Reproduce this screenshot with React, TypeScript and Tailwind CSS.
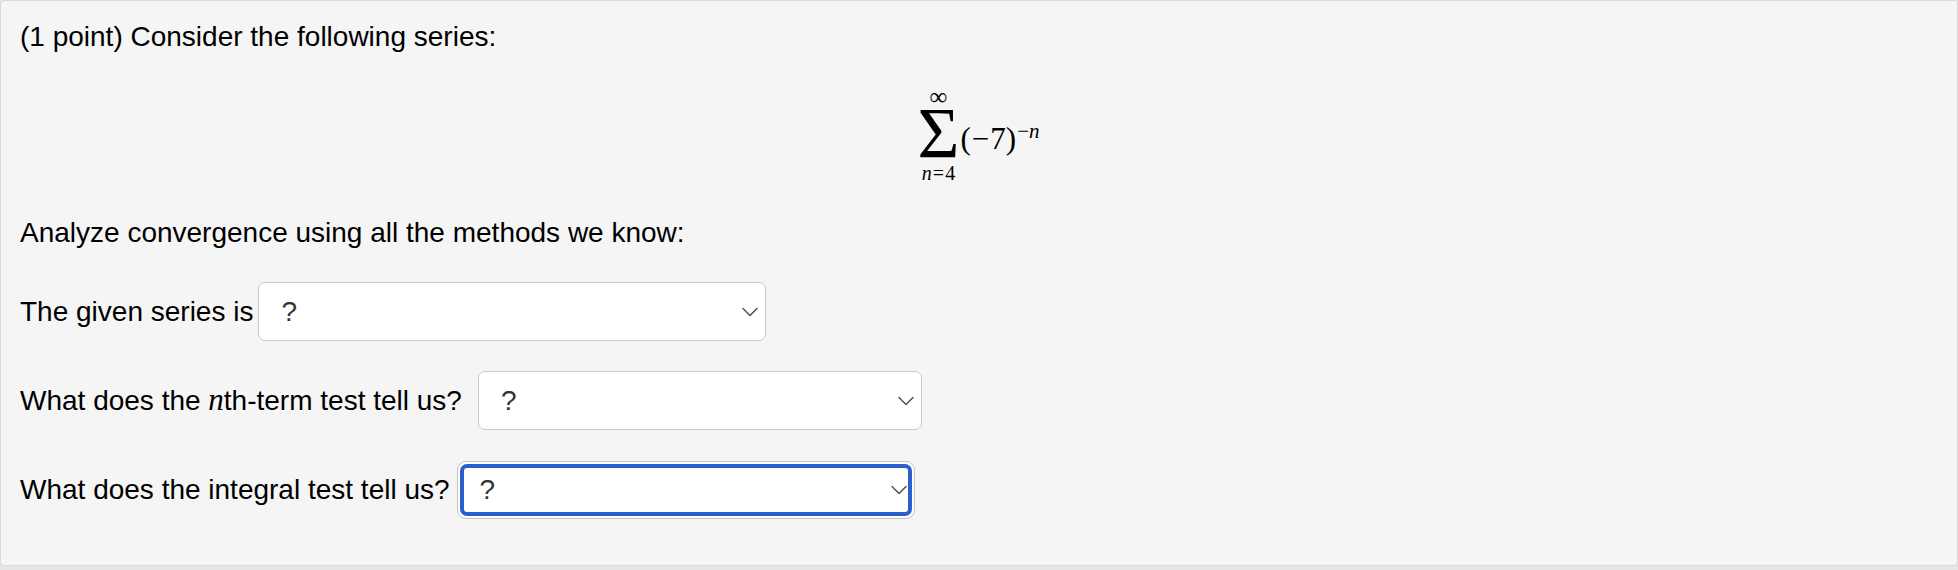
import React from 'react'

// ─── Small pieces ─────────────────────────────────────────────────────────────

function Chevron({ className }: { className: string }) {
  return (
    <svg
      viewBox="0 0 16 9"
      className={`pointer-events-none absolute top-1/2 h-[9px] w-[16px] -translate-y-1/2 ${className}`}
      fill="none"
      stroke="#555555"
      strokeWidth="1.6"
      strokeLinecap="round"
      strokeLinejoin="round"
    >
      <path d="M1 1l7 7 7-7" />
    </svg>
  )
}

function AnswerSelect({ width }: { width: string }) {
  return (
    <span className={`relative inline-block ${width}`}>
      <select
        defaultValue="?"
        className="h-[59px] w-full appearance-none rounded-[7px] border border-[#c9c9c9] bg-white pl-[22px] text-[28px] text-[#333333] outline-none [font-family:'Liberation_Sans',Arial,sans-serif]"
      >
        <option value="?">?</option>
        <option>convergent</option>
        <option>divergent</option>
      </select>
      <Chevron className="right-[8px]" />
    </span>
  )
}

function FocusedSelect() {
  return (
    <span className="relative inline-block w-[458px] rounded-[9px] border border-[#c4c4c4] bg-white p-[2px]">
      <select
        defaultValue="?"
        className="h-[52px] w-full appearance-none rounded-[7px] border-[4px] border-[#2b5fce] bg-white pl-[16px] text-[28px] text-[#333333] outline-none [font-family:'Liberation_Sans',Arial,sans-serif]"
      >
        <option value="?">?</option>
        <option>The integral test can be applied and the series converges</option>
        <option>The integral test cannot be applied</option>
      </select>
      <Chevron className="right-[7px]" />
    </span>
  )
}

// ─── Math display ─────────────────────────────────────────────────────────────

function SeriesDisplay() {
  return (
    <div className="mt-[30px] flex justify-center text-black [font-family:'Liberation_Serif','Times_New_Roman',serif]">
      <div className="flex items-center">
        <div className="flex w-[40px] flex-col items-center">
          <span className="h-[20px] text-[25px] leading-[20px]">∞</span>
          <span className="flex h-[52px] items-center overflow-visible text-[72px] leading-[52px]">Σ</span>
          <span className="mt-[3px] h-[22px] whitespace-nowrap text-[20px] leading-[22px]">
            <i>n</i>
            <span className="mx-[1px]">=</span>4
          </span>
        </div>
        <div className="ml-[2px] mt-[6px] whitespace-nowrap text-[31px] leading-none">
          (<span className="mx-[1px]">−</span>7)
          <sup className="relative -top-[11px] ml-[1px] text-[21px]">
            −<i>n</i>
          </sup>
        </div>
      </div>
    </div>
  )
}

// ─── Page ─────────────────────────────────────────────────────────────────────

export default function App() {
  return (
    <div className="h-[570px] w-[1958px] bg-[#e6e6e6] [font-family:'Liberation_Sans',Arial,sans-serif]">
      <div className="h-[566px] rounded-[4px] border border-[#d9d9d9] bg-[#f5f5f5] px-[19px] pt-[16px] text-[28px] text-black">
        <p className="leading-[40px]">(1 point) Consider the following series:</p>

        <SeriesDisplay />

        <p className="mt-[29px] leading-[40px]">Analyze convergence using all the methods we know:</p>

        <div className="mt-[29px] flex h-[59px] items-center gap-[5px]">
          <span>The given series is</span>
          <AnswerSelect width="w-[508px]" />
        </div>

        <div className="mt-[30px] flex h-[59px] items-center gap-[16px]">
          <span>
            What does the <i className="[font-family:'Liberation_Serif','Times_New_Roman',serif] text-[31px]">n</i>th-term test tell us?
          </span>
          <AnswerSelect width="w-[444px]" />
        </div>

        <div className="mt-[30px] flex h-[59px] items-center gap-[7px]">
          <span>What does the integral test tell us?</span>
          <FocusedSelect />
        </div>
      </div>
    </div>
  )
}
